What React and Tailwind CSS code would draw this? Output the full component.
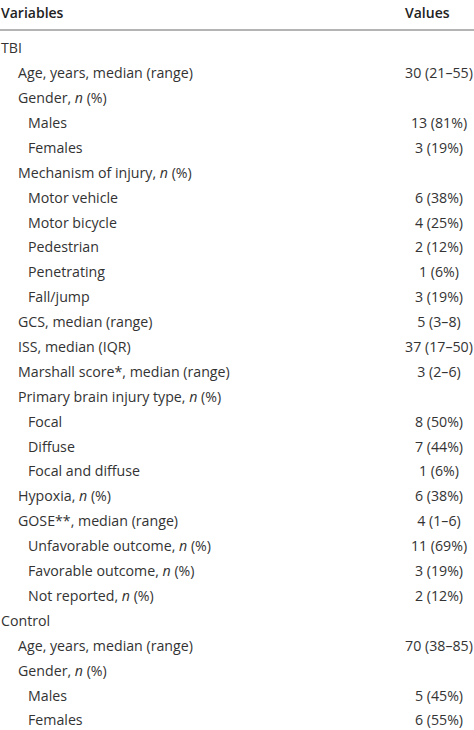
import React from 'react';

const rows = [
  { label: 'TBI', level: 0 },
  { label: 'Age, years, median (range)', level: 1, value: '30 (21–55)' },
  { label: 'Gender', n: true, level: 1 },
  { label: 'Males', level: 2, value: '13 (81%)' },
  { label: 'Females', level: 2, value: '3 (19%)' },
  { label: 'Mechanism of injury', n: true, level: 1 },
  { label: 'Motor vehicle', level: 2, value: '6 (38%)' },
  { label: 'Motor bicycle', level: 2, value: '4 (25%)' },
  { label: 'Pedestrian', level: 2, value: '2 (12%)' },
  { label: 'Penetrating', level: 2, value: '1 (6%)' },
  { label: 'Fall/jump', level: 2, value: '3 (19%)' },
  { label: 'GCS, median (range)', level: 1, value: '5 (3–8)' },
  { label: 'ISS, median (IQR)', level: 1, value: '37 (17–50)' },
  { label: 'Marshall score*, median (range)', level: 1, value: '3 (2–6)' },
  { label: 'Primary brain injury type', n: true, level: 1 },
  { label: 'Focal', level: 2, value: '8 (50%)' },
  { label: 'Diffuse', level: 2, value: '7 (44%)' },
  { label: 'Focal and diffuse', level: 2, value: '1 (6%)' },
  { label: 'Hypoxia', n: true, level: 1, value: '6 (38%)' },
  { label: 'GOSE**, median (range)', level: 1, value: '4 (1–6)' },
  { label: 'Unfavorable outcome', n: true, level: 2, value: '11 (69%)' },
  { label: 'Favorable outcome', n: true, level: 2, value: '3 (19%)' },
  { label: 'Not reported', n: true, level: 2, value: '2 (12%)' },
  { label: 'Control', level: 0 },
  { label: 'Age, years, median (range)', level: 1, value: '70 (38–85)' },
  { label: 'Gender', n: true, level: 1 },
  { label: 'Males', level: 2, value: '5 (45%)' },
  { label: 'Females', level: 2, value: '6 (55%)' },
];

const indent = ['pl-[1px]', 'pl-[18px]', 'pl-[28px]'];

export default function App() {
  return (
    <div className="w-[474px] h-[730px] overflow-hidden bg-white text-[#333] text-[14.2px] leading-none" style={{ fontFamily: '"Open Sans", sans-serif' }}>
      {/* Header */}
      <div className="flex items-end h-[31px] pb-[9px] border-b-2 border-[#b4b4b4] font-semibold text-[14px] text-[#222]">
        <div className="flex-1 pl-[1px]">Variables</div>
        <div className="w-[69px]">Values</div>
      </div>

      {/* Body */}
      <div className="pt-[5px]">
        {rows.map((r, i) => (
          <div key={i} className="flex items-center h-[24.9px] whitespace-nowrap">
            <div className={`flex-1 ${indent[r.level]}`}>
              {r.label}
              {r.n && (
                <>
                  , <i>n</i> (%)
                </>
              )}
            </div>
            <div className="w-[70px] text-center">{r.value}</div>
          </div>
        ))}
      </div>
    </div>
  );
}
